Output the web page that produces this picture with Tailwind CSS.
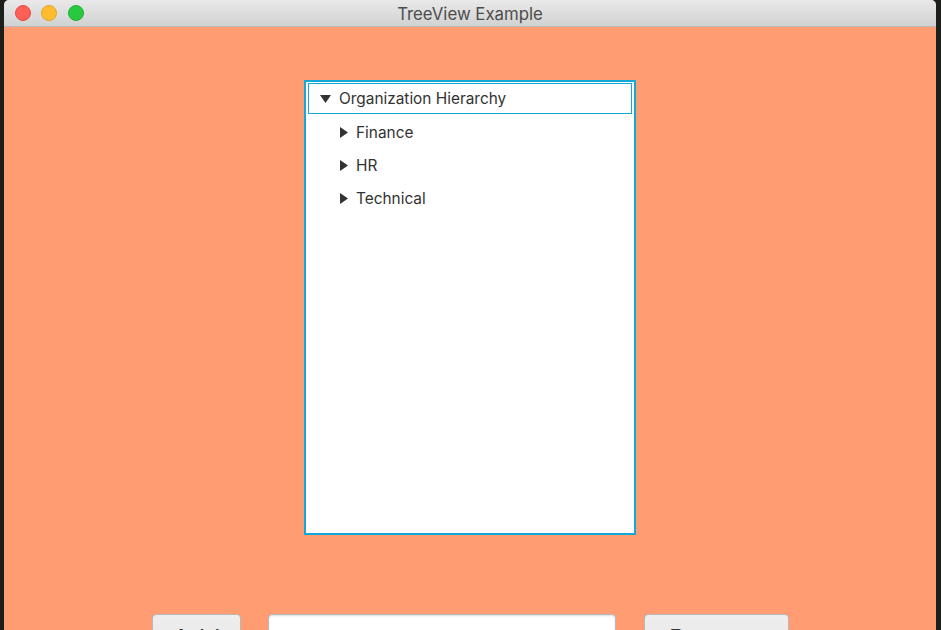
<!DOCTYPE html>
<html lang="en">
<head>
    <meta charset="UTF-8">
    <title>TreeView Example</title>
    <script src="https://cdn.jsdelivr.net/npm/@tailwindcss/browser@4"></script>
</head>
<body class="bg-[#1c1f1a] overflow-hidden font-['Inter','Roboto',sans-serif]">
    <div class="w-[941px] h-[630px] overflow-hidden pl-[4px] pr-[5px]">
        <div class="h-[630px] flex flex-col rounded-t-[5px] overflow-hidden bg-[#ff9c72]">
            <!-- Title bar -->
            <header class="relative h-[27px] shrink-0 flex items-center bg-gradient-to-b from-[#e9e9e9] to-[#d2d2d2] border-b border-[#b9b9b9]">
                <div class="flex gap-[10.6px] pl-[10.7px] pb-[1px]">
                    <span class="w-[16px] h-[16px] rounded-full bg-[#fe5f57] border border-[#e9473f]"></span>
                    <span class="w-[16px] h-[16px] rounded-full bg-[#febc2e] border border-[#e3a224]"></span>
                    <span class="w-[16px] h-[16px] rounded-full bg-[#28c940] border border-[#1fb032]"></span>
                </div>
                <h1 class="absolute inset-x-0 top-0 text-center text-[16.8px] leading-[28px] text-[#4d4d4d]">TreeView Example</h1>
            </header>

            <!-- Tree -->
            <main class="flex-1 flex flex-col items-center pt-[53px]">
                <div class="w-[332px] h-[455px] shrink-0 bg-white border-2 border-[#14a8d8] px-[2px] py-px text-[15.4px] text-[#333333]">
                    <div class="h-[31px] flex items-center border border-[#14a8d8] pl-[11px] gap-[8px]">
                        <svg width="11" height="8" viewBox="0 0 11 8"><path d="M0 0H11L5.5 8Z" fill="#333"/></svg>
                        <span>Organization Hierarchy</span>
                    </div>
                    <div class="h-[33px] flex items-center pl-[32px] gap-[8px] mt-[2px]">
                        <svg width="8" height="11" viewBox="0 0 8 11"><path d="M0 0V11L8 5.5Z" fill="#333"/></svg>
                        <span>Finance</span>
                    </div>
                    <div class="h-[33px] flex items-center pl-[32px] gap-[8px]">
                        <svg width="8" height="11" viewBox="0 0 8 11"><path d="M0 0V11L8 5.5Z" fill="#333"/></svg>
                        <span>HR</span>
                    </div>
                    <div class="h-[33px] flex items-center pl-[32px] gap-[8px]">
                        <svg width="8" height="11" viewBox="0 0 8 11"><path d="M0 0V11L8 5.5Z" fill="#333"/></svg>
                        <span>Technical</span>
                    </div>
                </div>

                <!-- Controls, cut off by the bottom of the shot -->
                <div class="mt-[79px] flex items-start w-full pl-[148px]">
                    <button class="w-[89px] h-[50px] shrink-0 flex justify-center items-start pt-[9px] rounded-[4px] border border-[#b8b8b8] bg-gradient-to-b from-[#eeeeee] to-[#e6e6e6] text-[25px] leading-[30px] text-[#333333]">Add</button>
                    <input class="w-[348px] h-[50px] shrink-0 ml-[27px] rounded-[4px] border border-[#b8b8b8] bg-white shadow-[inset_0_1px_2px_#00000022]">
                    <button class="w-[145px] h-[50px] shrink-0 ml-[28px] flex justify-center items-start pt-[9px] rounded-[4px] border border-[#b8b8b8] bg-gradient-to-b from-[#eeeeee] to-[#e6e6e6] text-[25px] leading-[30px] text-[#333333]">Remove</button>
                </div>
            </main>
        </div>
    </div>
</body>
</html>
